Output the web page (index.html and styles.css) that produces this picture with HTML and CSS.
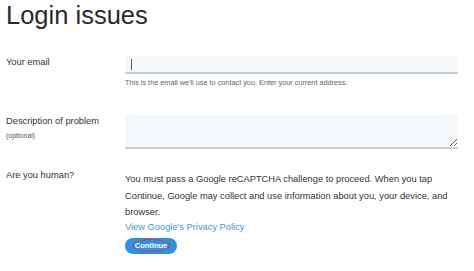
FILE: index.html
```html
<!DOCTYPE html>
<html lang="en">
<head>
    <meta charset="UTF-8">
    <title>Login issues</title>
    <link rel="stylesheet" href="styles.css">
</head>
<body>
    <h1>Login issues</h1>

    <form class="form">
        <div class="row row-email">
            <label class="label" for="email">Your email</label>
            <div class="field">
                <input class="input" id="email" type="text" value="">
                <span class="caret"></span>
                <p class="hint">This is the email we'll use to contact you. Enter your current address.</p>
            </div>
        </div>

        <div class="row row-desc">
            <label class="label" for="desc">Description of problem<small>(optional)</small></label>
            <div class="field">
                <textarea class="textarea" id="desc"></textarea>
            </div>
        </div>

        <div class="row row-human">
            <div class="label">Are you human?</div>
            <div class="field">
                <p class="text">You must pass a Google reCAPTCHA challenge to proceed. When you tap Continue, Google may collect and use information about you, your device, and browser.</p>
                <a class="link" href="#">View Google's Privacy Policy</a>
                <button class="button" type="button"><span>Continue</span></button>
            </div>
        </div>
    </form>
</body>
</html>
```

FILE: styles.css
```css
body {
    margin: 0;
    padding: 0 6px;
    font-family: 'Liberation Sans', Arial, sans-serif;
    color: #333;
    background: #fff;
}

h1 {
    margin: 0;
    padding-top: 1px;
    font-size: 25.5px;
    font-weight: normal;
    line-height: 28px;
    color: #2a2a2a;
}

.row {
    display: grid;
    grid-template-columns: 119px 333px;
}

.row-email { margin-top: 27px; }
.row-desc { margin-top: 28px; }
.row-human { margin-top: 20px; }

.label {
    font-size: 9.3px;
    line-height: 12px;
    color: #333;
}

.label small {
    display: block;
    margin-top: 3px;
    font-size: 7px;
    color: #555;
}

.field {
    position: relative;
}

.input, .textarea {
    display: block;
    box-sizing: border-box;
    width: 333px;
    margin: 0;
    border: 0;
    border-bottom: 2px solid #c9ced3;
    background: #f5f8fa;
    font: inherit;
}

.input {
    height: 18px;
}

.caret {
    position: absolute;
    left: 6px;
    top: 3px;
    width: 1px;
    height: 11px;
    background: #555;
}

.textarea {
    height: 34px;
    resize: vertical;
}

.hint {
    margin: 4px 0 0;
    font-size: 7.3px;
    line-height: 9px;
    color: #666;
}

.text {
    margin: 0;
    padding-top: 2px;
    font-size: 9.3px;
    line-height: 16.5px;
    color: #333;
}

.link {
    display: block;
    margin-top: 0;
    font-size: 9.3px;
    line-height: 12px;
    color: #3c97dc;
    text-decoration: none;
}

.button {
    display: block;
    margin-top: 5px;
    width: 52px;
    height: 16px;
    padding: 0;
    border: 0;
    border-radius: 9px;
    background: #2d91e3;
    color: #fff;
    font-family: inherit;
    font-size: 7.5px;
    font-weight: bold;
}

.button span {
    display: inline-block;
    padding: 1px 2px;
    border: 1px solid #e0353d;
    border-radius: 50%;
    line-height: 9px;
}
```
